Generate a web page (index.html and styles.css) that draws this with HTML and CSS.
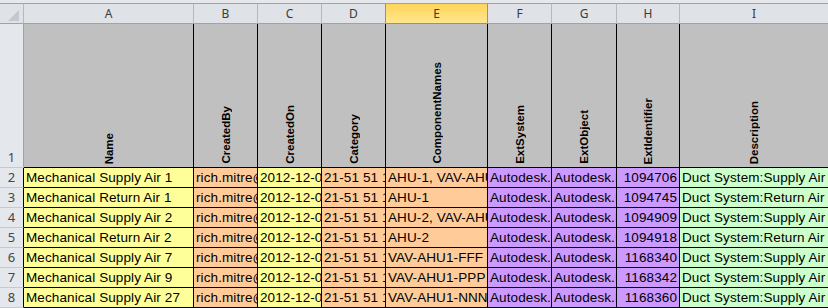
FILE: index.html
```html
<!DOCTYPE html>
<html>
<head>
<meta charset="utf-8">
<link rel="stylesheet" href="styles.css">
</head>
<body>
<div class="strip"></div>
<div class="sheet">
  <div class="ch corner"><svg width="24" height="20" viewBox="0 0 24 20"><polygon points="19,6 19,17 8,17" fill="#c4c8ce"/></svg></div>
  <div class="ch">A</div>
  <div class="ch">B</div>
  <div class="ch">C</div>
  <div class="ch pre-sel">D</div>
  <div class="ch sel">E</div>
  <div class="ch">F</div>
  <div class="ch">G</div>
  <div class="ch">H</div>
  <div class="ch last">I</div>

  <div class="rh first">1</div>
  <div class="hd"><span>Name</span></div>
  <div class="hd"><span>CreatedBy</span></div>
  <div class="hd"><span>CreatedOn</span></div>
  <div class="hd"><span>Category</span></div>
  <div class="hd"><span>ComponentNames</span></div>
  <div class="hd"><span>ExtSystem</span></div>
  <div class="hd"><span>ExtObject</span></div>
  <div class="hd"><span>ExtIdentifier</span></div>
  <div class="hd last"><span>Description</span></div>

  <div class="rh">2</div>
  <div class="c y">Mechanical Supply Air 1</div>
  <div class="c o">rich.mitre@</div>
  <div class="c y">2012-12-07</div>
  <div class="c o">21-51 51 10</div>
  <div class="c o">AHU-1, VAV-AHU1</div>
  <div class="c p">Autodesk.</div>
  <div class="c p">Autodesk.R</div>
  <div class="c p num">1094706</div>
  <div class="c g last">Duct System:Supply Air</div>

  <div class="rh">3</div>
  <div class="c y">Mechanical Return Air 1</div>
  <div class="c o">rich.mitre@</div>
  <div class="c y">2012-12-07</div>
  <div class="c o">21-51 51 10</div>
  <div class="c o">AHU-1</div>
  <div class="c p">Autodesk.</div>
  <div class="c p">Autodesk.R</div>
  <div class="c p num">1094745</div>
  <div class="c g last">Duct System:Return Air</div>

  <div class="rh">4</div>
  <div class="c y">Mechanical Supply Air 2</div>
  <div class="c o">rich.mitre@</div>
  <div class="c y">2012-12-07</div>
  <div class="c o">21-51 51 10</div>
  <div class="c o">AHU-2, VAV-AHU2</div>
  <div class="c p">Autodesk.</div>
  <div class="c p">Autodesk.R</div>
  <div class="c p num">1094909</div>
  <div class="c g last">Duct System:Supply Air</div>

  <div class="rh">5</div>
  <div class="c y">Mechanical Return Air 2</div>
  <div class="c o">rich.mitre@</div>
  <div class="c y">2012-12-07</div>
  <div class="c o">21-51 51 10</div>
  <div class="c o">AHU-2</div>
  <div class="c p">Autodesk.</div>
  <div class="c p">Autodesk.R</div>
  <div class="c p num">1094918</div>
  <div class="c g last">Duct System:Return Air</div>

  <div class="rh">6</div>
  <div class="c y">Mechanical Supply Air 7</div>
  <div class="c o">rich.mitre@</div>
  <div class="c y">2012-12-07</div>
  <div class="c o">21-51 51 10</div>
  <div class="c o">VAV-AHU1-FFF</div>
  <div class="c p">Autodesk.</div>
  <div class="c p">Autodesk.R</div>
  <div class="c p num">1168340</div>
  <div class="c g last">Duct System:Supply Air</div>

  <div class="rh">7</div>
  <div class="c y">Mechanical Supply Air 9</div>
  <div class="c o">rich.mitre@</div>
  <div class="c y">2012-12-07</div>
  <div class="c o">21-51 51 10</div>
  <div class="c o">VAV-AHU1-PPP</div>
  <div class="c p">Autodesk.</div>
  <div class="c p">Autodesk.R</div>
  <div class="c p num">1168342</div>
  <div class="c g last">Duct System:Supply Air</div>

  <div class="rh">8</div>
  <div class="c y">Mechanical Supply Air 27</div>
  <div class="c o">rich.mitre@</div>
  <div class="c y">2012-12-07</div>
  <div class="c o">21-51 51 10</div>
  <div class="c o">VAV-AHU1-NNN</div>
  <div class="c p">Autodesk.</div>
  <div class="c p">Autodesk.R</div>
  <div class="c p num">1168360</div>
  <div class="c g last">Duct System:Supply Air</div>
</div>
</body>
</html>
```

FILE: styles.css
```css
html, body {
  margin: 0;
  padding: 0;
  overflow: hidden;
  background: #ffffff;
}

.strip {
  height: 3px;
  background: #e6e8eb;
}

.sheet {
  display: grid;
  grid-template-columns: 24px 170px 64px 64px 64px 102px 64px 65px 63px 1fr;
  grid-template-rows: 21px 144px repeat(7, 20px);
  width: 828px;
  overflow: hidden;
}

.sheet > div {
  box-sizing: border-box;
  overflow: hidden;
  white-space: nowrap;
  min-width: 0;
}

.ch {
  background: #dfe3e8;
  border-top: 1px solid #9ea3ab;
  border-bottom: 1px solid #9ea3ab;
  border-right: 1px solid #b4b9c0;
  font-family: "Noto Sans", "DejaVu Sans", sans-serif;
  font-size: 12px;
  color: #3a3a3a;
  text-align: center;
  line-height: 19px;
}

.ch.corner svg {
  display: block;
}

.ch.pre-sel {
  border-right-color: #c28a33;
}

.ch.sel {
  background: linear-gradient(#ffd45a, #ffe78e);
  border-bottom-color: #c28a33;
  border-right-color: #c28a33;
}

.ch.last, .hd.last, .c.last {
  border-right: none;
}

.rh {
  background: #e4e7eb;
  border-right: 1px solid #000;
  border-bottom: 1px solid #c5c9cf;
  font-family: "Noto Sans", "DejaVu Sans", sans-serif;
  font-size: 13px;
  color: #454545;
  display: flex;
  align-items: flex-end;
  justify-content: center;
  line-height: 19px;
}

.rh.first {
  border-right-color: #9ea3ab;
}

.hd {
  background: #c0c0c0;
  border-right: 1px solid #000;
  border-bottom: 1px solid #000;
  display: flex;
  align-items: flex-end;
  justify-content: center;
  padding-bottom: 3px;
}

.hd span {
  writing-mode: vertical-rl;
  transform: rotate(180deg);
  font-family: "Liberation Sans", Arial, sans-serif;
  font-weight: bold;
  font-size: 11.5px;
  line-height: 12px;
  color: #000;
}

.c {
  border-right: 1px solid #000;
  border-bottom: 1px solid #000;
  font-family: "Liberation Sans", Arial, sans-serif;
  font-size: 13.5px;
  letter-spacing: 0.1px;
  line-height: 19px;
  color: #000;
  padding-left: 2px;
}

.c.num {
  text-align: right;
  padding-left: 0;
  padding-right: 2px;
}

.y { background: #ffff99; }
.o { background: #ffcc99; }
.p { background: #cc99ff; }
.g { background: #ccffcc; }
```
